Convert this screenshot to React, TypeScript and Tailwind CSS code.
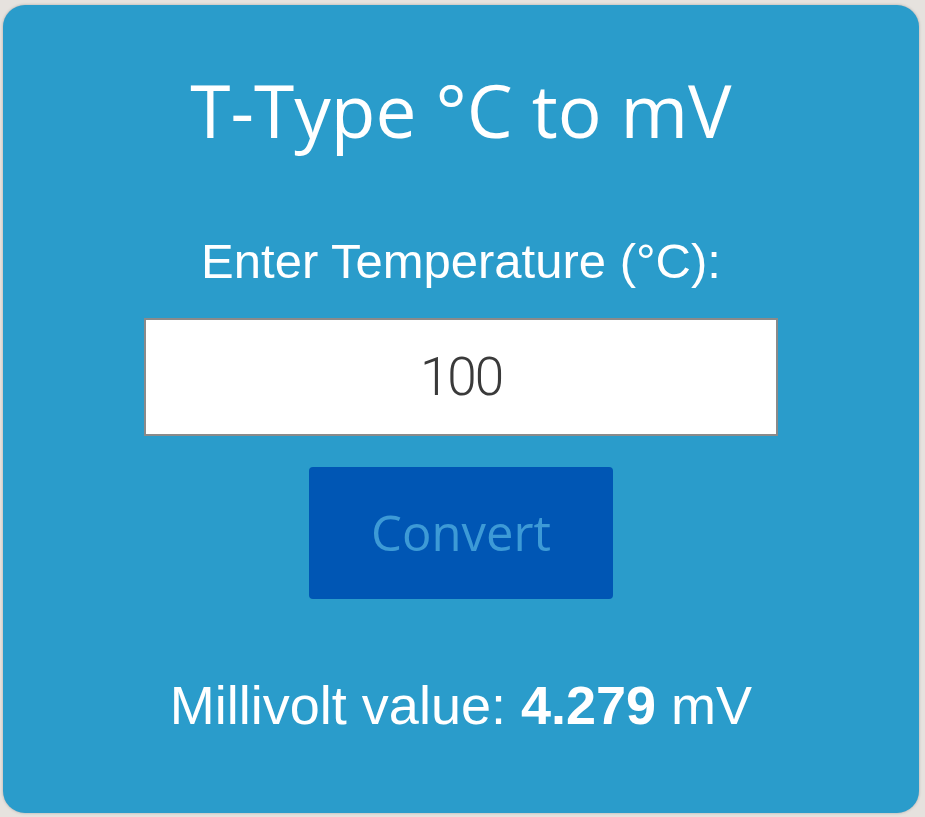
import React from "react";

export default function App() {
  return (
    <div className="w-[925px] h-[817px] bg-[#e6e2de] pt-[5px] pl-[3px]">
      <div className="w-[916px] h-[808px] rounded-[22px] bg-[#2a9ccb] flex flex-col items-center shadow-[0_0_3px_rgba(0,0,0,0.25)]">
        <h1 className="mt-[55px] text-white text-[73px] leading-[100px] font-['Open_Sans',sans-serif] font-normal">
          T-Type °C to mV
        </h1>
        <label className="mt-[73px] text-white text-[49px] leading-[56px] font-['Liberation_Sans',Arial,sans-serif]">
          Enter Temperature (°C):
        </label>
        <input
          readOnly
          value="100"
          className="mt-[29px] w-[634px] h-[118px] bg-white border-2 border-[#8a8a8a] text-center text-[53px] tracking-[-2px] text-[#3a3a3a] font-['Roboto',sans-serif] font-light outline-none"
        />
        <button className="mt-[31px] w-[304px] h-[132px] rounded-[4px] bg-[#0056b4] text-[#3d9ad6] text-[49px] font-['Open_Sans',sans-serif]">
          Convert
        </button>
        <p className="mt-[76px] text-white text-[54px] leading-[60px] font-['Liberation_Sans',Arial,sans-serif]">
          Millivolt value: <span className="font-bold">4.279</span> mV
        </p>
      </div>
    </div>
  );
}
